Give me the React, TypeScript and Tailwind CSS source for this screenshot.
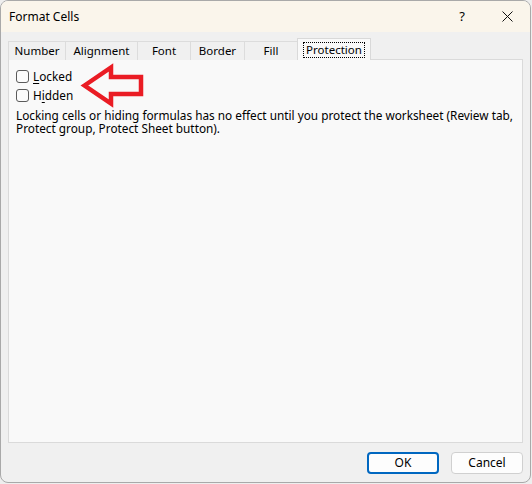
import React from "react";

const tabs = [
  { label: "Number", w: "w-[57px]" },
  { label: "Alignment", w: "w-[72px]" },
  { label: "Font", w: "w-[53px]" },
  { label: "Border", w: "w-[54px]" },
  { label: "Fill", w: "w-[53px]" },
];

function Check({ u, rest }: { u: string; rest: [string, string] }) {
  return (
    <div className="flex items-center h-[19px] shrink-0">
      <div className="w-[13px] h-[13px] rounded-[3px] border border-[#5a5a5a] bg-[#fbfbfb] shrink-0" />
      <span className="ml-[4px] text-[11.8px] leading-[15px]">
        {rest[0]}
        <span className="underline underline-offset-2">{u}</span>
        {rest[1]}
      </span>
    </div>
  );
}

export default function App() {
  return (
    <div className="w-[532px] h-[484px] bg-[#eeeeee] relative" style={{ fontFamily: '"Segoe UI", "Noto Sans", "Open Sans", sans-serif' }}>
      <div className="w-[531px] h-[483px] rounded-[8px] border border-[#a9a9a9] bg-[#f0f0f0] overflow-hidden flex flex-col text-black">
        {/* title bar */}
        <div className="h-[31px] bg-[#faf5eb] flex items-center pl-[8px] shrink-0">
          <span className="text-[12px]">Format Cells</span>
          <div className="flex-1" />
          <span className="text-[13px] mr-[37px]">?</span>
          <svg width="11" height="11" viewBox="0 0 11 11" className="mr-[17px]">
            <path d="M0.5 0.5 L10.5 10.5 M10.5 0.5 L0.5 10.5" stroke="#111" strokeWidth="1" />
          </svg>
        </div>
        {/* body */}
        <div className="flex-1 flex flex-col px-[7px] pt-[7px] pb-[8px]">
          <div className="flex items-end h-[21px] relative z-10 -mb-px">
            {tabs.map((t) => (
              <div
                key={t.label}
                className={`${t.w} h-[19px] border-t border-l border-[#dcdcdc] flex items-center justify-center text-[11.5px] bg-[#f0f0f0]`}
              >
                {t.label}
              </div>
            ))}
            <div className="w-[74px] h-[22px] border border-b-0 border-[#d9d9d9] bg-[#f9f9f9] flex items-center justify-center">
              <span className="text-[11.5px] leading-[14px] px-[2px] border border-dotted border-black">Protection</span>
            </div>
          </div>
          <div className="flex-1 bg-[#f9f9f9] border border-[#dadada] pl-[7px] pt-[7px] flex flex-col">
            <Check u="L" rest={["", "ocked"]} />
            <Check u="i" rest={["H", "dden"]} />
            <p className="text-[11.8px] leading-[13px] mt-[4px] pr-[6px]">
              Locking cells or hiding formulas has no effect until you protect the worksheet (Review tab, Protect group, Protect Sheet button).
            </p>
          </div>
          <div className="flex justify-end gap-[12px] mt-[9px]">
            <button className="w-[72px] h-[22px] rounded-[4px] border-2 border-[#0067c0] bg-[#fdfdfd] text-[12px]">OK</button>
            <button className="w-[72px] h-[22px] rounded-[4px] border border-[#d0d0d0] bg-[#fdfdfd] text-[12px]">Cancel</button>
          </div>
        </div>
      </div>
      <svg className="absolute left-0 top-0 pointer-events-none" width="532" height="484">
        <path d="M84.5 85.5 L111 67.5 L111 77 L141 77 L141 94 L111 94 L111 103.5 Z" fill="none" stroke="#ea1c24" strokeWidth="4.5" strokeLinejoin="miter" />
      </svg>
    </div>
  );
}
